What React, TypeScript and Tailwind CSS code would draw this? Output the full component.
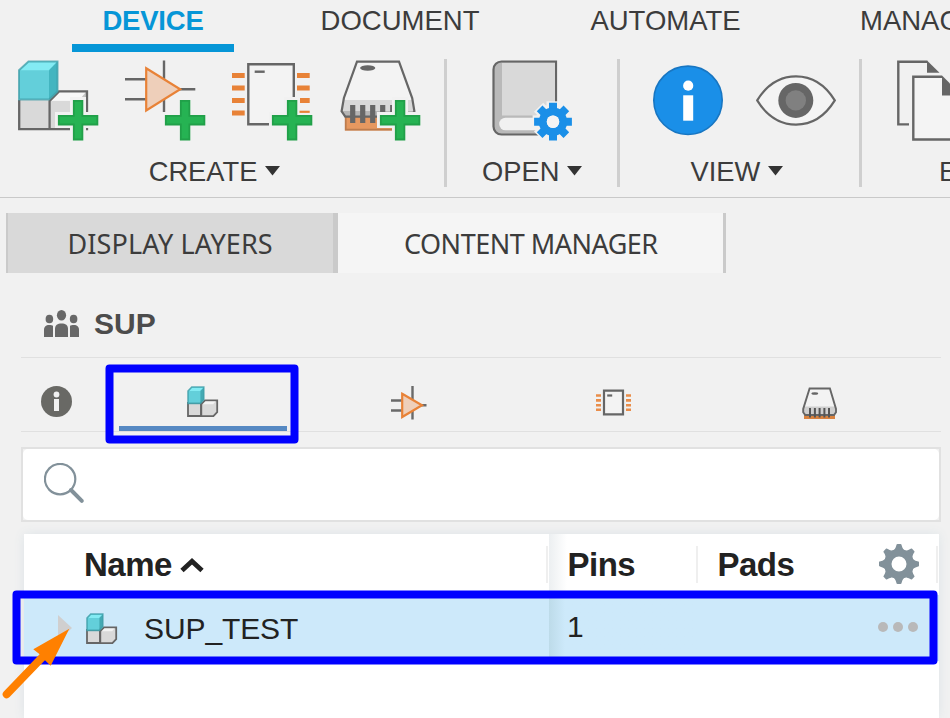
import React from "react";

const GEAR_TEETH = [0, 45, 90, 135];

const Plus = () => (
  <>
    <path
      d="M55 40h10v15h15v10H65v15H55V65H40V55h15z"
      fill="#f1f1f1"
      stroke="#f1f1f1"
      strokeWidth="6"
    />
    <path
      d="M55.8 40.9h8.6v15h15v8.6h-15v15h-8.6v-15h-15v-8.6h15z"
      fill="#26b353"
      stroke="#21a049"
      strokeWidth="1.8"
    />
  </>
);

const NewDeviceIcon = () => (
  <svg width="81" height="81" viewBox="0 0 81 81">
    <path d="M1.2 40h30v29.2h-30z" fill="#d9d9d9" />
    <path d="M32 40.5 41.5 32h27.5L60 40.5z" fill="#f7f7f7" />
    <path d="M33 41h20v28H33z" fill="#d9d9d9" />
    <path d="m63 38 5-6v7z" fill="#c4c4c4" />
    <path
      d="M1.2 40v29.2h67.8V31.4H41L31.6 41v28"
      fill="none"
      stroke="#666"
      strokeWidth="2.3"
    />
    <path d="M1 10.3 10.5 1.5h29v30L31 39.5H1z" fill="#63cfda" />
    <path d="M1 10.3 10.5 1.5h29L31 10.3z" fill="#83ebf3" />
    <path d="m31 10.3 8.5-8.8v30L31 39.5z" fill="#43b5c0" />
    <path
      d="M1 10.3 10.5 1.5h29v30L31 39.5H1z"
      fill="none"
      stroke="#3d9da8"
      strokeOpacity="0.75"
      strokeWidth="2"
    />
    <Plus />
  </svg>
);

const NewSymbolIcon = () => (
  <svg width="81" height="81" viewBox="0 0 81 81">
    <path
      d="M0 19.3h22M0 39.3h22M39 .5V53M54 29.3h16.3"
      stroke="#666"
      strokeWidth="2.4"
    />
    <path
      d="M21.2 8.2 55.2 29.3 21.2 50.5z"
      fill="#eecfba"
      stroke="#e88237"
      strokeWidth="2.2"
    />
    <Plus />
  </svg>
);

const NewFootprintIcon = () => (
  <svg width="81" height="81" viewBox="0 0 81 81">
    <path
      d="M0 15.4h12.7M0 27.9h12.7M0 40.4h12.7M0 52.9h12.7M65 15.4h12.7M65 27.9h12.7M67 40.4h10.7"
      stroke="#e88237"
      strokeWidth="5"
    />
    <path
      d="M16.3 4.2h45.5v60H16.3z"
      fill="#f3f3f3"
      stroke="#666"
      strokeWidth="2.4"
    />
    <path d="M22.7 11.7h10" stroke="#666" strokeWidth="2.4" />
    <Plus />
    <path d="M67.500 51.800h10.200" stroke="#e88237" strokeWidth="2.2" />
  </svg>
);

const NewPackageIcon = () => (
  <svg width="81" height="81" viewBox="0 0 81 81">
    <path d="M5 56h47.500v14.500H5z" fill="#e69860" />
    <path d="M5.7 57v12.7h46.800" fill="none" stroke="#bd7c4e" strokeWidth="1.8" />
    <path
      d="M17 1.7h42L72.2 38l2.2 13.3-4 5.4H5.3l-3.7-5.4L3.9 38z"
      fill="#f3f3f3"
    />
    <path d="M3.5 40h69.3l1.5 11h-73z" fill="#d9d9d9" />
    <path d="M2 51h72l-4 5.7H5.3z" fill="#b5b5b5" />
    <path
      d="M17 1.7h42L72.2 38l2.2 13.3-4 5.4H5.3l-3.7-5.4L3.9 38z"
      fill="none"
      stroke="#666"
      strokeWidth="2.2"
    />
    <path
      d="M12.7 45v18M22.7 45v18M32.7 45v18M42.7 45v18M52.7 45v18"
      stroke="#666"
      strokeWidth="5.2"
    />
    <ellipse cx="27.7" cy="8" rx="7.6" ry="2.8" fill="#666" />
    <Plus />
  </svg>
);

const LibraryIcon = () => (
  <svg width="81" height="81" viewBox="0 0 81 81">
    <path
      d="M64 1.5H9.5a8 8 0 0 0-8 8v57a8 8 0 0 0 8 8H64z"
      fill="#b9b9b9"
      stroke="#666"
      strokeWidth="2.2"
    />
    <path d="M10 3h53v52.5H10z" fill="#d9d9d9" />
    <path d="M63 57.7H13.5a6.3 6.3 0 0 0 0 12.6H63z" fill="#f1f1f1" />
    <g stroke="#f1f1f1" strokeWidth="13">
      <circle cx="61" cy="61.7" r="11" fill="#f1f1f1" />
      {GEAR_TEETH.map((a) => (
        <path key={a} d="M61 41.3v40.8" transform={`rotate(${a} 61 61.7)`} />
      ))}
    </g>
    <g stroke="#1a8fe8">
      <circle cx="61" cy="61.7" r="10.2" fill="none" strokeWidth="8" />
      {GEAR_TEETH.map((a) => (
        <path
          key={a}
          d="M61 42.800v6M61 74.6v6"
          strokeWidth="8"
          transform={`rotate(${a} 61 61.7)`}
        />
      ))}
    </g>
    <circle cx="61" cy="61.7" r="6.3" fill="#f4f4f4" />
  </svg>
);

const InfoIcon = () => (
  <svg width="70" height="81" viewBox="0 0 70 81">
    <circle
      cx="35"
      cy="40.3"
      r="34.2"
      fill="#1a8fe8"
      stroke="#1876c2"
      strokeWidth="1.6"
    />
    <circle cx="35.2" cy="25.7" r="5.1" fill="#fff" />
    <path d="M30.2 35.3h10v25.4h-10z" fill="#fff" />
  </svg>
);

const EyeIcon = () => (
  <svg width="81" height="81" viewBox="0 0 81 81">
    <path
      d="M1.2 40.4C11 24.5 24.3 16.4 40 16.4s29 8.1 38.8 24C69 56.3 55.7 64.6 40 64.6S11 56.3 1.2 40.4z"
      fill="#f4f4f4"
      stroke="#666"
      strokeWidth="2.2"
    />
    <circle cx="39.8" cy="40.4" r="17.5" fill="#666" />
    <circle cx="39.8" cy="40.4" r="10.2" fill="#808080" />
  </svg>
);

const CopyIcon = () => (
  <svg width="81" height="81" viewBox="0 0 81 81">
    <path
      d="M12 64.4H1.3V1.7h29"
      fill="none"
      stroke="#666"
      strokeWidth="2.4"
    />
    <path d="M30 .5 42.5 12.7H30z" fill="#666" />
    <path
      d="M45 16.7H16.3v62.8H70V42"
      fill="#f4f4f4"
      stroke="#666"
      strokeWidth="2.4"
    />
    <path d="M45 15.5 65 35.5H45z" fill="#666" />
  </svg>
);

const DeviceIcon = () => (
  <svg width="32" height="32" viewBox="0 0 32 32">
    <path
      d="M1 17h13v13H1z"
      fill="#d9d9d9"
      stroke="#666"
      strokeWidth="1.8"
    />
    <path
      d="M14.3 18.2 18 14.3h12.2v11.9l-3.8 4H14.3z"
      fill="#d9d9d9"
      stroke="#666"
      strokeWidth="1.8"
    />
    <path d="M15.8 18.2 18.5 15.4h10l-2.4 2.8z" fill="#f3f3f3" />
    <path d="M1 5 4.8 1h12v12.6l-3.6 3.8H1z" fill="#63cfda" />
    <path d="M2 5 5 1.8h11L13.2 5z" fill="#83ebf3" />
    <path d="M13.4 5 16.8 1.4v12l-3.4 4z" fill="#43a9b3" />
    <path
      d="M1 5 4.8 1h12v12.6l-3.6 3.8H1z"
      fill="none"
      stroke="#3d9da8"
      strokeOpacity="0.8"
      strokeWidth="1.6"
    />
  </svg>
);

const SymbolIcon = () => (
  <svg width="36" height="34" viewBox="0 0 36 34">
    <path
      d="M0 14.5h11M0 24.5h11M21.5 0v33.5M30 19.3h5.5"
      stroke="#6a6a6a"
      strokeWidth="2.4"
    />
    <path
      d="M11.2 7.8 31 19.3 11.2 31z"
      fill="#eecfba"
      stroke="#e88237"
      strokeWidth="2.2"
    />
  </svg>
);

const FootprintIcon = () => (
  <svg width="36" height="28" viewBox="0 0 36 28">
    <path
      d="M0 6.5h5M0 11.4h5M0 16.2h5M0 20.8h5M30 6.5h5M30 11.4h5M30 16.2h5M30 20.8h5"
      stroke="#e88237"
      strokeOpacity="0.9"
      strokeWidth="2.6"
    />
    <path
      d="M8 1.7h19v23.6H8z"
      fill="#f3f3f3"
      stroke="#666"
      strokeWidth="2.2"
    />
    <path d="M11.2 6.5h5" stroke="#666" strokeWidth="2.2" />
  </svg>
);

const PackageIcon = () => (
  <svg width="36" height="33" viewBox="0 0 36 33">
    <path d="M2 27h31v5H2z" fill="#d9823f" />
    <path
      d="M7.6 1.5h20.3L34 22v3.2L32 28H3.3L1.2 25.2V22z"
      fill="#f3f3f3"
    />
    <path d="M2 19.5h31v7.8H2z" fill="#cfcfcf" />
    <path
      d="M7.6 1.5h20.3L34 22v3.2L32 28H3.3L1.2 25.2V22z"
      fill="none"
      stroke="#666"
      strokeWidth="1.9"
    />
    <path
      d="M8 21v9.5M12.9 21v9.5M17.6 21v9.5M22.4 21v9.5M27 21v9.5"
      stroke="#555"
      strokeWidth="2"
    />
    <ellipse cx="12.8" cy="6.5" rx="3.4" ry="1.3" fill="#666" />
  </svg>
);

const PeopleIcon = () => (
  <svg width="36" height="27" viewBox="0 0 36 27" fill="#686868">
    <ellipse cx="5.4" cy="9" rx="3.8" ry="4.3" />
    <ellipse cx="17.5" cy="5.2" rx="4.6" ry="5.2" />
    <ellipse cx="29.6" cy="9" rx="3.8" ry="4.3" />
    <path d="M0 27v-7c0-3.5 2-5 5-5 2 0 3.2.3 4 .8V27z" />
    <path d="M11 27v-8c0-4 2.5-5.6 6.5-5.6S24 15 24 19v8z" />
    <path d="M26 27V15.8c.8-.5 2-.8 4-.8 3 0 5 1.500 5 5v7z" />
  </svg>
);

const SettingsIcon = () => (
  <svg width="40" height="40" viewBox="0 0 40 40">
    <circle cx="20" cy="20" r="11.2" fill="none" stroke="#82919a" strokeWidth="7.4" />
    {[0, 45, 90, 135, 180, 225, 270, 315].map((a) => (
      <path
        key={a}
        d="M18.500 0h3c1 0 1 .8 1.200 1.500.8 3 1.800 4.500 4.300 6H13c2.500-1.500 3.500-3 4.300-6C17.500.8 17.500 0 18.500 0z"
        fill="#82919a"
        transform={`rotate(${a} 20 20)`}
      />
    ))}
  </svg>
);

const Label = ({ children }: { children: React.ReactNode }) => (
  <div className="flex items-center gap-[8px] text-[27.3px] leading-8 mt-[14px] whitespace-nowrap">
    <span className="translate-y-px">{children}</span>
    <svg width="15" height="10" viewBox="0 0 15 10">
      <path d="M0 0h15L7.5 9.5z" fill="#333" />
    </svg>
  </div>
);

const Divider = () => (
  <div className="w-[2.5px] h-32 -mt-px shrink-0 bg-[#cfcfcf]"></div>
);

const App = () => {
  return (
    <div className="relative flex flex-col w-[950px] h-[718px] overflow-hidden bg-[#f1f1f1] text-[#3c3c3c] font-['Liberation_Sans',Arial,sans-serif]">
      <nav className="flex h-[52px] shrink-0 pl-[72px] text-[27.5px] leading-[42px] text-center whitespace-nowrap">
        <div className="w-[162px] shrink-0 h-[52px] border-b-8 border-[#0696d7] font-bold text-[#0696d7] tracking-[-0.2px]">
          DEVICE
        </div>
        <div className="w-[332px] shrink-0">DOCUMENT</div>
        <div className="w-[199px] shrink-0">AUTOMATE</div>
        <div className="pl-[95px]">MANAGE</div>
      </nav>

      <div className="flex h-[146px] shrink-0 pt-2 border-b border-[#c9c9c9]">
        <div className="w-[444px] shrink-0 pl-[17.7px]">
          <div className="flex gap-[26.4px]">
            <NewDeviceIcon />
            <NewSymbolIcon />
            <NewFootprintIcon />
            <NewPackageIcon />
          </div>
          <div className="pl-[131px]">
            <Label>CREATE</Label>
          </div>
        </div>
        <Divider />
        <div className="w-[170.5px] shrink-0 pl-[35.5px]">
          <div className="pl-[10px]">
            <LibraryIcon />
          </div>
          <Label>OPEN</Label>
        </div>
        <Divider />
        <div className="w-[239.5px] shrink-0 pl-[33px]">
          <div className="flex gap-[33px]">
            <InfoIcon />
            <EyeIcon />
          </div>
          <div className="pl-[38px]">
            <Label>VIEW</Label>
          </div>
        </div>
        <Divider />
        <div className="pl-[35.5px]">
          <CopyIcon />
          <div className="pl-[42px]">
            <Label>EDIT</Label>
          </div>
        </div>
      </div>

      <div className="flex h-[60px] shrink-0 mt-[15px] ml-[6px] text-[27px] leading-[62px] font-['Noto_Sans',sans-serif] whitespace-nowrap">
        <div className="w-[332px] shrink-0 pl-[59.5px] bg-[#d9d9d9] border-l-2 border-r-[5px] border-[#cacaca] tracking-[0.1px]">
          DISPLAY LAYERS
        </div>
        <div className="w-[388px] shrink-0 pl-[66px] bg-[#f5f5f5] border-r-[3px] border-[#cacaca] tracking-[-0.5px]">
          CONTENT MANAGER
        </div>
      </div>

      <div className="flex flex-col grow ml-[21px] w-[920px]">
        <div className="flex items-center gap-[14px] h-[85px] shrink-0 pt-[16px] pl-[23px] border-b border-[#e0e0e0]">
          <PeopleIcon />
          <h2 className="text-[30px] leading-8 pt-px font-bold text-[#4c4c4c]">SUP</h2>
        </div>

        <div className="flex h-[74px] shrink-0 border-b border-[#e0e0e0]">
          <div className="w-[79px] shrink-0 pl-[20px] pt-[28px]">
            <svg width="31" height="31" viewBox="0 0 31 31">
              <circle cx="15.5" cy="15.5" r="15.5" fill="#696965" />
              <circle cx="15.5" cy="8.5" r="2.9" fill="#f1f1f1" />
              <path d="M13 13h5v12h-5z" fill="#f1f1f1" />
            </svg>
          </div>
          <div className="flex flex-col items-center justify-between w-[206px] pt-[28px]">
            <DeviceIcon />
            <div className="w-[168px] h-[5px] bg-[#5689c3]"></div>
          </div>
          <div className="flex justify-center w-[206px] pt-[28px]">
            <SymbolIcon />
          </div>
          <div className="flex justify-center w-[204px] pt-[31px]">
            <FootprintIcon />
          </div>
          <div className="flex justify-center w-[208px] pt-[29px]">
            <PackageIcon />
          </div>
        </div>

        <div className="h-[75px] shrink-0 mt-[15px] bg-[#f1f1f1] border-2 border-[#e1e1e1]">
          <div className="h-full rounded-[5px] bg-white pl-[21px] pt-[14px]">
            <svg width="41" height="41" viewBox="0 0 41 41" fill="none" stroke="#82919a">
              <circle cx="16.1" cy="16.1" r="15.2" strokeWidth="2.2" />
              <path d="m27 27 10.800 10.800" strokeWidth="4" strokeLinecap="round" />
            </svg>
          </div>
        </div>

        <div className="flex flex-col grow mt-3 ml-[3px] w-[915px] bg-white shadow-[0_0_10px_#dde4e8] text-[#222]">
          <div className="flex h-[61px] shrink-0 text-[33px] leading-[61px] font-bold tracking-[-0.5px]">
            <div className="flex items-center w-[525px] shrink-0 pl-[60px] gap-2">
              Name
              <svg width="24" height="16" viewBox="0 0 24 16">
                <path d="m2 13.5 10-9.3 10 9.300" fill="none" stroke="#222" strokeWidth="4.8" />
              </svg>
              <div className="w-[2px] h-[37px] ml-auto mr-px bg-[#efefef]"></div>
            </div>
            <div className="flex items-center w-[149px] shrink-0 pl-[18.5px] bg-linear-to-r from-[#eceff1] to-white to-[18px]">
              Pins
              <div className="w-[2px] h-[37px] ml-auto bg-[#efefef]"></div>
            </div>
            <div className="flex items-center grow pl-[19.5px]">
              Pads
              <div className="ml-auto -mt-0.5">
                <SettingsIcon />
              </div>
              <div className="w-[2px] h-[37px] ml-[17px] mr-px bg-[#efefef]"></div>
            </div>
          </div>

          <div className="flex h-[66px] shrink-0 bg-[#cde9fa] text-[30px] leading-[66px]">
            <div className="flex items-center w-[525px] shrink-0 pl-[34px]">
              <svg width="14" height="26" viewBox="0 0 14 26">
                <path d="M0 0 14 13 0 26z" fill="#d0cfcf" />
              </svg>
              <div className="ml-[13.5px] mr-[26.5px] pt-px">
                <DeviceIcon />
              </div>
              <span className="tracking-[-0.1px] pt-px">SUP_TEST</span>
            </div>
            <div className="w-[149px] shrink-0 pl-[18px] bg-linear-to-r from-[#bddbe9] to-[#cde9fa] to-[16px]">
              <div className="-mt-px">1</div>
            </div>
            <div className="flex items-center justify-end gap-[5px] grow pr-[21px] pb-[2px]">
              <div className="w-2.5 h-2.5 rounded-full bg-[#b9b9b9]"></div>
              <div className="w-2.5 h-2.5 rounded-full bg-[#b9b9b9]"></div>
              <div className="w-2.5 h-2.5 rounded-full bg-[#b9b9b9]"></div>
            </div>
          </div>
        </div>
      </div>

      {/* highlight frames and pointer over the panel */}
      <svg className="absolute inset-0" width="950" height="718" viewBox="0 0 950 718">
        <g fill="none" stroke="#0000ff" strokeWidth="8" strokeLinejoin="round">
          <rect x="109.5" y="368.5" width="185" height="71" />
          <rect x="16.5" y="594.5" width="917" height="66" />
        </g>
        <path d="M6.7 694.3 43 656.5" stroke="#ff8000" strokeWidth="8" strokeLinecap="round" />
        <path d="m69.3 628.7-36 20.6 6 4.7 5.7 6.3 5.7 5.4z" fill="#ff8000" />
      </svg>
    </div>
  );
};

export default App;
